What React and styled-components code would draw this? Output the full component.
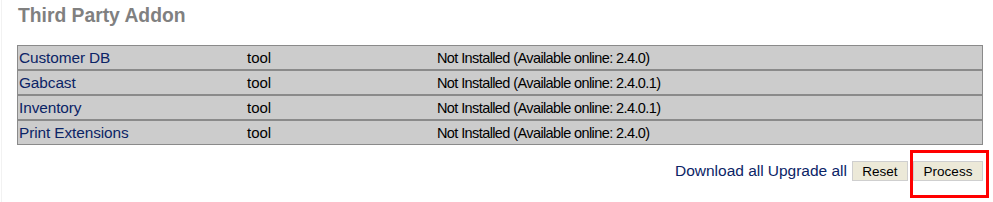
import React from 'react'
import styled, { createGlobalStyle } from 'styled-components'

const GlobalStyle = createGlobalStyle`
  html, body {
    margin: 0;
    padding: 0;
    background: #ffffff;
  }
`

const addons = [
  { name: 'Customer DB', type: 'tool', status: 'Not Installed (Available online: 2.4.0)' },
  { name: 'Gabcast', type: 'tool', status: 'Not Installed (Available online: 2.4.0.1)' },
  { name: 'Inventory', type: 'tool', status: 'Not Installed (Available online: 2.4.0.1)' },
  { name: 'Print Extensions', type: 'tool', status: 'Not Installed (Available online: 2.4.0)' },
]

const App = () => {
  return (
    <>
      <GlobalStyle />
      <Page>
        <Panel>
          <Heading>Third Party Addon</Heading>
          <AddonTable>
            {addons.map((a) => (
              <Row key={a.name}>
                <NameCell href="#">{a.name}</NameCell>
                <Cell>{a.type}</Cell>
                <Cell narrow>{a.status}</Cell>
              </Row>
            ))}
          </AddonTable>
          <Actions>
            <ActionLink href="#">Download all</ActionLink>
            <ActionLink href="#">Upgrade all</ActionLink>
            <Button>Reset</Button>
            <Highlight>
              <Button wide>Process</Button>
            </Highlight>
          </Actions>
        </Panel>
      </Page>
    </>
  )
}

const Page = styled.div`
  width: 993px;
  height: 202px;
  padding-left: 1px;
  box-sizing: border-box;
  font-family: "Liberation Sans", Arial, sans-serif;
`

const Panel = styled.div`
  height: 100%;
  border-left: 1px solid #f2f2f2;
  padding: 5px 10px 0 15px;
  box-sizing: border-box;
  display: flex;
  flex-direction: column;
`

const Heading = styled.h2`
  margin: 0 0 0 1px;
  font-size: 19.3px;
  font-weight: bold;
  color: #808080;
  line-height: 22px;
`

const AddonTable = styled.div`
  margin-top: 18px;
  width: 966px;
  box-sizing: border-box;
  border: 1px solid #8a8a8a;
  background: #cccccc;
`

const Row = styled.div`
  display: grid;
  grid-template-columns: 228px 190px 1fr;
  height: 23px;
  align-items: center;
  padding-left: 1px;
  & + & {
    border-top: 2px solid #8a8a8a;
  }
`

const NameCell = styled.a`
  color: #0b2466;
  text-decoration: none;
  font-size: 15.4px;
  letter-spacing: -0.1px;
`

const Cell = styled.span`
  color: #000000;
  font-size: ${(p) => (p.narrow ? '14.5px' : '15px')};
  letter-spacing: ${(p) => (p.narrow ? '-0.6px' : '0')};
  white-space: nowrap;
`

const Actions = styled.div`
  display: flex;
  align-items: center;
  justify-content: flex-end;
  width: 966px;
  margin-top: 16px;
  gap: 4px;
`

const ActionLink = styled.a`
  color: #0b2466;
  text-decoration: none;
  font-size: 15.5px;
  &:last-of-type {
    margin-right: 1px;
  }
`

const Button = styled.button`
  height: 20px;
  width: ${(p) => (p.wide ? '70px' : '56px')};
  padding: 0;
  background: #ece9d8;
  border: 1px solid #cfcfcf;
  font-family: "Liberation Sans", Arial, sans-serif;
  font-size: 13.5px;
  color: #000000;
  box-sizing: border-box;
`

const Highlight = styled.span`
  position: relative;
  display: inline-flex;
  margin-left: 1px;
  &::after {
    content: '';
    position: absolute;
    left: -3px;
    top: -11px;
    right: -6px;
    bottom: -17px;
    border: 3px solid #ff0000;
    pointer-events: none;
  }
`

export default App
